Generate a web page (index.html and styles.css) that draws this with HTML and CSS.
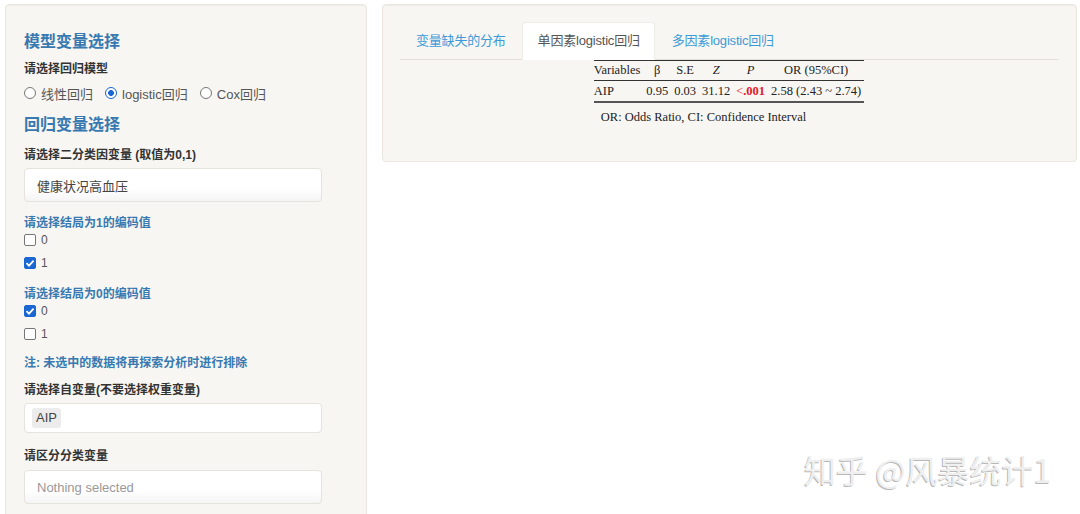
FILE: index.html
```html
<!DOCTYPE html>
<html lang="zh-CN">
<head>
    <meta charset="UTF-8">
    <meta name="viewport" content="width=device-width, initial-scale=1.0">
    <title>回归分析</title>
    <link rel="stylesheet" href="styles.css">
</head>
<body>
    <div class="page">
        <aside class="well sidebar">
            <h4 class="section-title">模型变量选择</h4>
            <div class="field-label label-model">请选择回归模型</div>
            <div class="radio-row">
                <label class="radio"><span class="dot"></span>线性回归</label>
                <label class="radio checked"><span class="dot"></span>logistic回归</label>
                <label class="radio"><span class="dot"></span>Cox回归</label>
            </div>

            <h4 class="section-title title-second">回归变量选择</h4>
            <div class="field-label label-outcome">请选择二分类因变量 (取值为0,1)</div>
            <div class="select-box">健康状况高血压</div>

            <div class="blue-label first-group">请选择结局为1的编码值</div>
            <label class="check"><span class="box"></span>0</label>
            <label class="check checked"><span class="box"></span>1</label>

            <div class="blue-label second-group">请选择结局为0的编码值</div>
            <label class="check checked"><span class="box"></span>0</label>
            <label class="check"><span class="box"></span>1</label>

            <div class="blue-label note">注: 未选中的数据将再探索分析时进行排除</div>
            <div class="field-label label-x">请选择自变量(不要选择权重变量)</div>
            <div class="select-box multi"><span class="chip">AIP</span></div>

            <div class="field-label label-cat">请区分分类变量</div>
            <div class="select-box placeholder">Nothing selected</div>
        </aside>

        <main class="well result">
            <ul class="tabs">
                <li><a href="#">变量缺失的分布</a></li>
                <li class="active"><a href="#">单因素logistic回归</a></li>
                <li><a href="#">多因素logistic回归</a></li>
            </ul>

            <table class="reg-table">
                <thead>
                    <tr>
                        <th class="left">Variables</th>
                        <th>β</th>
                        <th>S.E</th>
                        <th><i>Z</i></th>
                        <th><i>P</i></th>
                        <th>OR (95%CI)</th>
                    </tr>
                </thead>
                <tbody>
                    <tr>
                        <td class="left">AIP</td>
                        <td>0.95</td>
                        <td>0.03</td>
                        <td>31.12</td>
                        <td class="sig">&lt;<b>.001</b></td>
                        <td>2.58 (2.43 ~ 2.74)</td>
                    </tr>
                </tbody>
                <tfoot>
                    <tr>
                        <td colspan="6" class="foot">OR: Odds Ratio, CI: Confidence Interval</td>
                    </tr>
                </tfoot>
            </table>
        </main>
    </div>

    <div class="watermark">知乎 @风暴统计1</div>
</body>
</html>
```

FILE: styles.css
```css
body{
    margin: 0;
    background: #ffffff;
    font-family: "Liberation Sans", "Noto Sans CJK SC", sans-serif;
    color: #333333;
    overflow: hidden;
}

.page{
    display: flex;
    align-items: flex-start;
    gap: 15px;
    padding: 4px 3px 0 5px;
}

.well{
    box-sizing: border-box;
    background-color: #f8f6f2;
    border: 1px solid #ebe7e0;
    border-radius: 4px;
    box-shadow: inset 0 1px 1px rgba(0, 0, 0, 0.04);
}

/* sidebar */

.sidebar{
    width: 362px;
    padding: 19px 18px 30px;
}

.section-title{
    margin: 8px 0 0;
    font-size: 16px;
    line-height: 20px;
    font-weight: 700;
    color: #3779b0;
}

.title-second{
    margin-top: 12px;
}

.field-label{
    font-size: 12px;
    line-height: 18px;
    font-weight: 700;
    color: #333333;
}

.label-model{ margin-top: 8px; }
.label-outcome{ margin-top: 11px; }
.label-x{ margin-top: 10px; }
.label-cat{ margin-top: 14px; }

.radio-row{
    display: flex;
    align-items: center;
    height: 20px;
    margin-top: 5px;
}

.radio{
    display: inline-flex;
    align-items: center;
    gap: 5px;
    margin-right: 12px;
    font-size: 13px;
    color: #555555;
}

.dot{
    box-sizing: border-box;
    width: 12px;
    height: 12px;
    border: 1px solid #767676;
    border-radius: 50%;
    background: #ffffff;
}

.radio.checked .dot{
    border: 1.5px solid #1a66d2;
    background: radial-gradient(circle, #1a66d2 0 2.6px, #ffffff 3.2px);
}

.select-box{
    box-sizing: border-box;
    width: 298px;
    height: 34px;
    margin-top: 4px;
    padding: 0 12px;
    display: flex;
    align-items: center;
    background: linear-gradient(#ffffff 60%, #f5f5f5);
    border: 1px solid #e6e2dc;
    border-radius: 4px;
    font-size: 13px;
    color: #444444;
}

.select-box.multi{
    height: 30px;
    padding: 0 7px;
    background: #ffffff;
}

.select-box.placeholder{
    margin-top: 5px;
    color: #999999;
}

.chip{
    padding: 2px 4px;
    background-color: #ececec;
    border-radius: 3px;
    line-height: 16px;
    color: #444444;
}

.blue-label{
    font-size: 12px;
    line-height: 16px;
    font-weight: 700;
    color: #3779b0;
}

.first-group{ margin-top: 13px; }
.second-group{ margin-top: 14px; }
.note{ margin-top: 12px; }

.check{
    display: flex;
    align-items: center;
    gap: 5px;
    height: 18px;
    font-size: 12px;
    color: #555555;
}

.check + .check{
    margin-top: 5px;
}

.box{
    box-sizing: border-box;
    width: 12px;
    height: 12px;
    border: 1px solid #767676;
    border-radius: 2px;
    background: #ffffff;
}

.check.checked .box{
    border-color: #1a66d2;
    background: #1a66d2 url("data:image/svg+xml,%3Csvg xmlns='http://www.w3.org/2000/svg' viewBox='0 0 12 12'%3E%3Cpath d='M2.5 6.2 L5 8.6 L9.6 3.6' fill='none' stroke='white' stroke-width='1.8'/%3E%3C/svg%3E") center / 12px 12px no-repeat;
}

/* result panel */

.result{
    width: 695px;
    padding: 17px 18px 35px 17px;
}

.tabs{
    display: flex;
    margin: 0;
    padding: 0;
    list-style: none;
    border-bottom: 1px solid #e4dfd7;
}

.tabs li{
    margin-right: 1px;
    margin-bottom: -1px;
}

.tabs a{
    display: block;
    padding: 0 14px 0 15px;
    line-height: 36px;
    border: 1px solid transparent;
    border-radius: 4px 4px 0 0;
    font-size: 13px;
    letter-spacing: -0.2px;
    color: #3d9ad8;
    text-decoration: none;
}

.tabs .active a{
    background-color: #ffffff;
    border-color: #efece7 #efece7 transparent;
    color: #555555;
}

.reg-table{
    margin: 0 auto;
    border-collapse: collapse;
    font-family: "Liberation Serif", serif;
    font-size: 12.5px;
    color: #222222;
}

.reg-table thead tr{
    border-top: 1px solid #333333;
    border-bottom: 1px solid #333333;
}

.reg-table tbody tr{
    border-bottom: 2px solid #555555;
}

.reg-table th{
    padding: 0 3px;
    line-height: 19px;
    font-weight: 400;
    text-align: center;
}

.reg-table td{
    padding: 1px 3px 0;
    line-height: 19px;
    text-align: right;
}

.reg-table .left{
    padding-left: 0;
    text-align: left;
}

.reg-table .sig{
    color: #e0202a;
}

.reg-table td.foot{
    padding: 5px 7px 0;
    line-height: 18px;
    text-align: left;
}

.watermark{
    position: absolute;
    left: 804px;
    top: 449px;
    font-family: "Noto Sans CJK SC", sans-serif;
    font-size: 32px;
    line-height: 40px;
    color: #efefef;
    text-shadow: -1px 1px 0 #b8b8b8;
    white-space: nowrap;
}
```
